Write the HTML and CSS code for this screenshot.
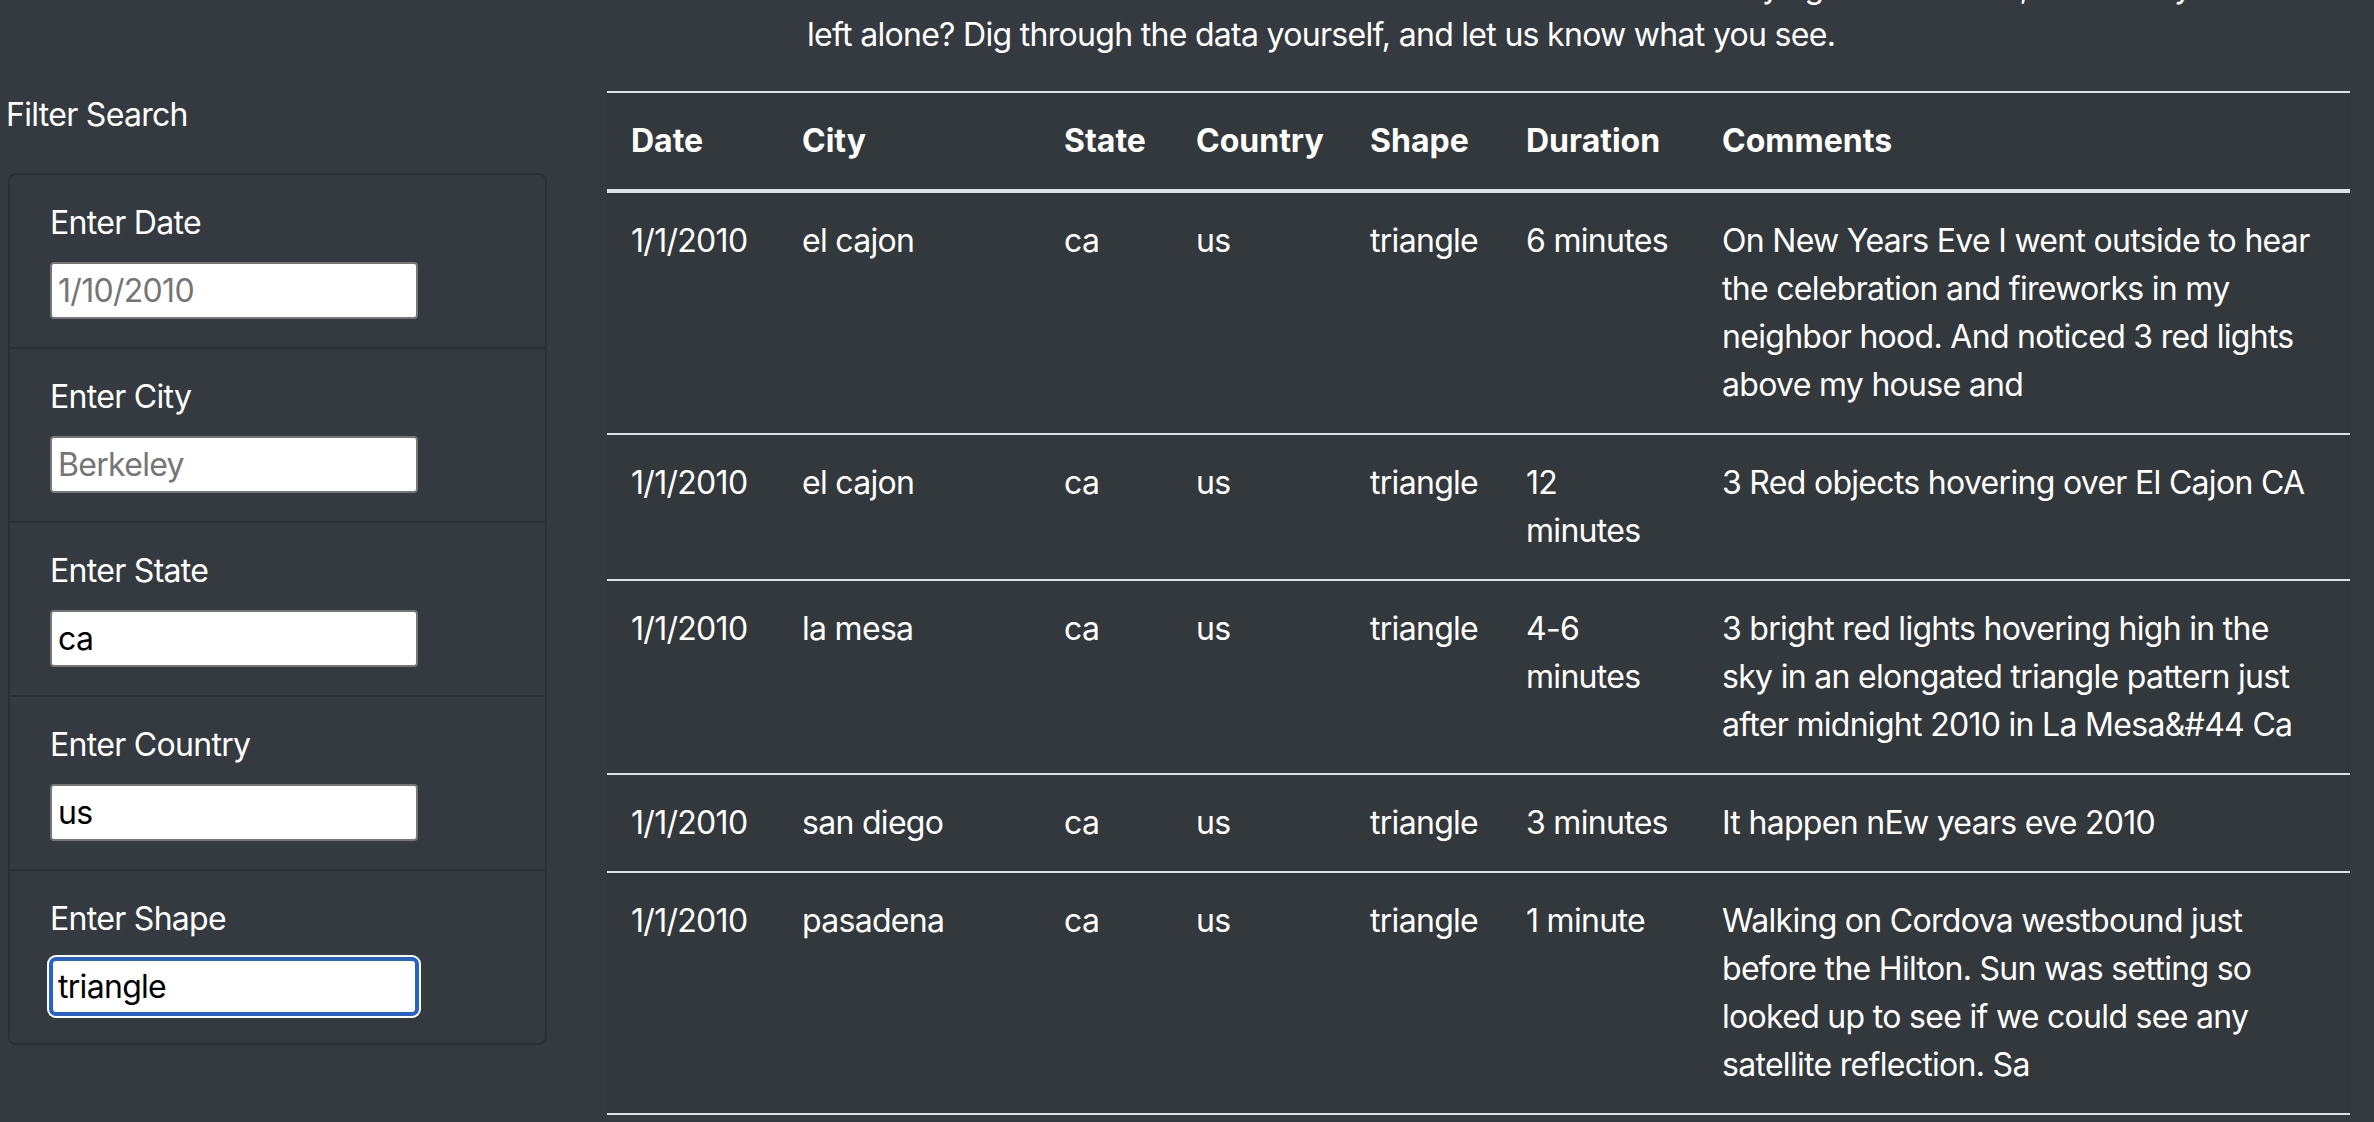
FILE: index.html
```html
<!DOCTYPE html>
<html lang="en">
<head>
<meta charset="utf-8">
<title>UFO Sightings</title>
<link rel="stylesheet" href="styles.css">
</head>
<body>
<div class="page">
  <div class="intro-row">
    <p class="intro">Is the truth out there? Are the aliens all around us? Are the aliens trying to contact us, or are they<br>left alone? Dig through the data yourself, and let us know what you see.</p>
  </div>
  <div class="main">
    <aside class="sidebar">
      <h5 class="filter-title">Filter Search</h5>
      <ul class="filter-list">
        <li class="filter-item">
          <label class="filter-label" for="date">Enter Date</label>
          <input class="filter-input" id="date" type="text" placeholder="1/10/2010">
        </li>
        <li class="filter-item">
          <label class="filter-label" for="city">Enter City</label>
          <input class="filter-input" id="city" type="text" placeholder="Berkeley">
        </li>
        <li class="filter-item">
          <label class="filter-label" for="state">Enter State</label>
          <input class="filter-input" id="state" type="text" value="ca">
        </li>
        <li class="filter-item">
          <label class="filter-label" for="country">Enter Country</label>
          <input class="filter-input" id="country" type="text" value="us">
        </li>
        <li class="filter-item">
          <label class="filter-label" for="shape">Enter Shape</label>
          <input class="filter-input is-focused" id="shape" type="text" value="triangle">
        </li>
      </ul>
    </aside>
    <section class="content">
      <table class="ufo-table">
        <colgroup>
          <col class="col-date">
          <col class="col-city">
          <col class="col-state">
          <col class="col-country">
          <col class="col-shape">
          <col class="col-duration">
          <col class="col-comments">
        </colgroup>
        <thead>
          <tr>
            <th>Date</th>
            <th>City</th>
            <th>State</th>
            <th>Country</th>
            <th>Shape</th>
            <th>Duration</th>
            <th>Comments</th>
          </tr>
        </thead>
        <tbody>
          <tr>
            <td>1/1/2010</td>
            <td>el cajon</td>
            <td>ca</td>
            <td>us</td>
            <td>triangle</td>
            <td>6 minutes</td>
            <td>On New Years Eve I went outside to hear the celebration and fireworks in my neighbor hood. And noticed 3 red lights above my house and</td>
          </tr>
          <tr>
            <td>1/1/2010</td>
            <td>el cajon</td>
            <td>ca</td>
            <td>us</td>
            <td>triangle</td>
            <td>12 minutes</td>
            <td>3 Red objects hovering over El Cajon CA</td>
          </tr>
          <tr>
            <td>1/1/2010</td>
            <td>la mesa</td>
            <td>ca</td>
            <td>us</td>
            <td>triangle</td>
            <td>4-6 minutes</td>
            <td>3 bright red lights hovering high in the sky in an elongated triangle pattern just after midnight 2010 in La Mesa&amp;#44 Ca</td>
          </tr>
          <tr>
            <td>1/1/2010</td>
            <td>san diego</td>
            <td>ca</td>
            <td>us</td>
            <td>triangle</td>
            <td>3 minutes</td>
            <td>It happen nEw years eve 2010</td>
          </tr>
          <tr>
            <td>1/1/2010</td>
            <td>pasadena</td>
            <td>ca</td>
            <td>us</td>
            <td>triangle</td>
            <td>1 minute</td>
            <td>Walking on Cordova westbound just before the Hilton. Sun was setting so looked up to see if we could see any satellite reflection. Sa</td>
          </tr>
        </tbody>
      </table>
    </section>
  </div>
</div>
</body>
</html>
```

FILE: styles.css
```css
* {
  box-sizing: border-box;
}

html, body {
  margin: 0;
  padding: 0;
  background: #343a40;
  color: #ffffff;
  font-family: Inter, "Noto Sans", sans-serif;
  font-size: 32px;
  line-height: 48px;
  letter-spacing: -0.7px;
}

body {
  overflow: hidden;
  height: 1122px;
}

.page {
  margin-top: -37px;
}

.intro-row {
  display: grid;
  grid-template-columns: 541px 1fr;
  column-gap: 60px;
  padding-left: 6px;
}

.intro {
  grid-column: 2;
  margin: 0 0 32px 200px;
  white-space: nowrap;
}

.main {
  display: grid;
  grid-template-columns: 541px 1743px;
  column-gap: 60px;
  padding-left: 6px;
  align-items: start;
}

.filter-title {
  margin: 0 0 34px 0;
  font-size: 32px;
  line-height: 48px;
  font-weight: 400;
}

.filter-list {
  list-style: none;
  margin: 0 0 0 2px;
  padding: 0;
  border: 2px solid #2c3035;
  border-radius: 8px;
}

.filter-item {
  display: flex;
  flex-direction: column;
  align-items: flex-start;
  padding: 24px 40px 28px;
  border-bottom: 2px solid #2c3035;
}

.filter-item:last-child {
  border-bottom: none;
}

.filter-label {
  display: block;
  margin-bottom: 15px;
  line-height: 48px;
}

.filter-input {
  width: 368px;
  height: 57px;
  padding: 0 6px;
  border: 2px solid #767676;
  border-radius: 4px;
  background: #ffffff;
  color: #000000;
  font-family: Inter, "Noto Sans", sans-serif;
  font-size: 32px;
  letter-spacing: -0.7px;
  outline: none;
}

.filter-input::placeholder {
  color: #757575;
}

.filter-input.is-focused {
  border: 3px solid #2563c9;
  padding: 0 5px;
  border-radius: 6px;
  box-shadow: 0 0 0 1px #2563c9, 0 0 0 3px #ffffff;
}

.ufo-table {
  width: 1743px;
  table-layout: fixed;
  border-collapse: collapse;
  background: #33383d;
  color: #ffffff;
  border-top: 2px solid #dee2e6;
  border-bottom: 2px solid #dee2e6;
}

.col-date { width: 171px; }
.col-city { width: 262px; }
.col-state { width: 132px; }
.col-country { width: 174px; }
.col-shape { width: 156px; }
.col-duration { width: 196px; }
.col-comments { width: 652px; }

.ufo-table th,
.ufo-table td {
  padding: 24px;
  text-align: left;
  vertical-align: top;
  line-height: 48px;
}

.ufo-table th {
  font-weight: 700;
  letter-spacing: 0;
  border-bottom: 4px solid #dee2e6;
}

.ufo-table tbody tr + tr td {
  border-top: 2px solid #dee2e6;
}
```
